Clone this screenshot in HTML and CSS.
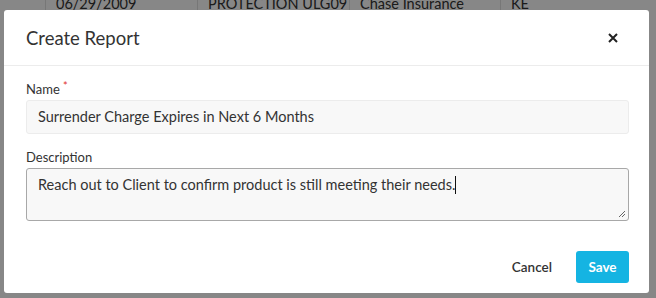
FILE: index.html
```html
<!DOCTYPE html>
<html>
<head>
<meta charset="utf-8">
<link rel="stylesheet" href="styles.css">
</head>
<body>
<div class="page">
  <div class="table-row">
    <div class="cell c0"></div>
    <div class="cell c1">06/29/2009</div>
    <div class="cell c2">PROTECTION ULG09</div>
    <div class="cell c3">Chase Insurance</div>
    <div class="cell c4">KE</div>
  </div>
  <div class="overlay"></div>
  <div class="modal">
    <div class="modal-header">
      <h2 class="title">Create Report</h2>
      <svg class="close" width="10" height="10" viewBox="0 0 10 10"><path d="M1 1 L9 9 M9 1 L1 9" stroke="#222" stroke-width="2" fill="none"/></svg>
    </div>
    <div class="modal-body">
      <label class="label">Name <span class="req">*</span></label>
      <div class="input">Surrender Charge Expires in Next 6 Months</div>
      <label class="label desc-label">Description</label>
      <div class="textarea">Reach out to Client to confirm product is still meeting their needs.<span class="caret"></span>
        <svg class="grip" width="8" height="8" viewBox="0 0 8 8"><path d="M7 1 L1 7 M7 4 L4 7" stroke="#666" stroke-width="1" fill="none"/></svg>
      </div>
    </div>
    <div class="modal-footer">
      <button class="btn-cancel">Cancel</button>
      <button class="btn-save">Save</button>
    </div>
  </div>
</div>
</body>
</html>
```
FILE: styles.css
```css
* { box-sizing: border-box; }
html, body { margin: 0; padding: 0; }
body {
  width: 656px;
  height: 298px;
  overflow: hidden;
  font-family: Lato, "Open Sans", sans-serif;
  background: #ffffff;
}
.page {
  position: relative;
  width: 656px;
  height: 298px;
  overflow: hidden;
  display: flow-root;
}
.table-row {
  display: flex;
  height: 40px;
  margin-top: -4px;
  font-size: 14.5px;
  line-height: 16px;
  color: #333;
}
.cell {
  border-left: 1px solid #e0e0e0;
  padding: 0 0 0 10px;
  white-space: nowrap;
  overflow: hidden;
}
.c0 { width: 45px; border-left: none; }
.c1 { width: 152px; }
.c2 { width: 152px; }
.c3 { width: 151px; }
.c4 { width: 156px; }
.overlay {
  position: absolute;
  inset: 0;
  background: rgba(0,0,0,0.47);
}
.modal {
  position: absolute;
  left: 4px;
  top: 10px;
  width: 645px;
  height: 283px;
  background: #fff;
  border-radius: 3px;
  display: flex;
  flex-direction: column;
}
.modal-header {
  height: 56px;
  border-bottom: 1px solid #ececec;
  display: flex;
  align-items: center;
  justify-content: space-between;
  padding: 0 31px 0 22px;
}
.title {
  margin: 0;
  font-size: 18.5px;
  font-weight: 400;
  color: #333;
  padding-top: 1px;
}
.close {
  display: block;
  margin-top: 1px;
}
.modal-body {
  padding: 15px 20px 0 22px;
  display: flex;
  flex-direction: column;
}
.label {
  font-size: 13px;
  color: #333;
  line-height: 17px;
  height: 17px;
}
.req { color: #e0312f; font-size: 11px; position: relative; top: -4px; }
.input {
  margin-top: 2px;
  height: 34px;
  background: #f8f8f8;
  border: 1px solid #ececec;
  border-radius: 3px;
  font-size: 14.5px;
  color: #333;
  padding: 7px 11px;
  line-height: 18px;
}
.desc-label { margin-top: 15px; }
.textarea {
  position: relative;
  margin-top: 2px;
  height: 53px;
  background: #f8f8f8;
  border: 1px solid #a8a8a8;
  border-radius: 3px;
  font-size: 14.5px;
  color: #333;
  padding: 7px 11px;
  line-height: 18px;
}
.caret {
  display: inline-block;
  width: 1px;
  height: 18px;
  background: #111;
  vertical-align: -4px;
}
.grip {
  position: absolute;
  right: 2px;
  bottom: 2px;
}
.modal-footer {
  margin-top: auto;
  padding: 0 20px 10px 0;
  display: flex;
  justify-content: flex-end;
  align-items: center;
  gap: 24px;
}
.btn-cancel {
  background: none;
  border: none;
  font-family: inherit;
  font-size: 13.5px;
  font-weight: 600;
  color: #333;
  padding: 0;
}
.btn-save {
  width: 53px;
  height: 32px;
  background: #15b4e2;
  border: none;
  border-radius: 3px;
  color: #fff;
  font-family: inherit;
  font-size: 13.5px;
  font-weight: 700;
  padding: 0;
}
```
